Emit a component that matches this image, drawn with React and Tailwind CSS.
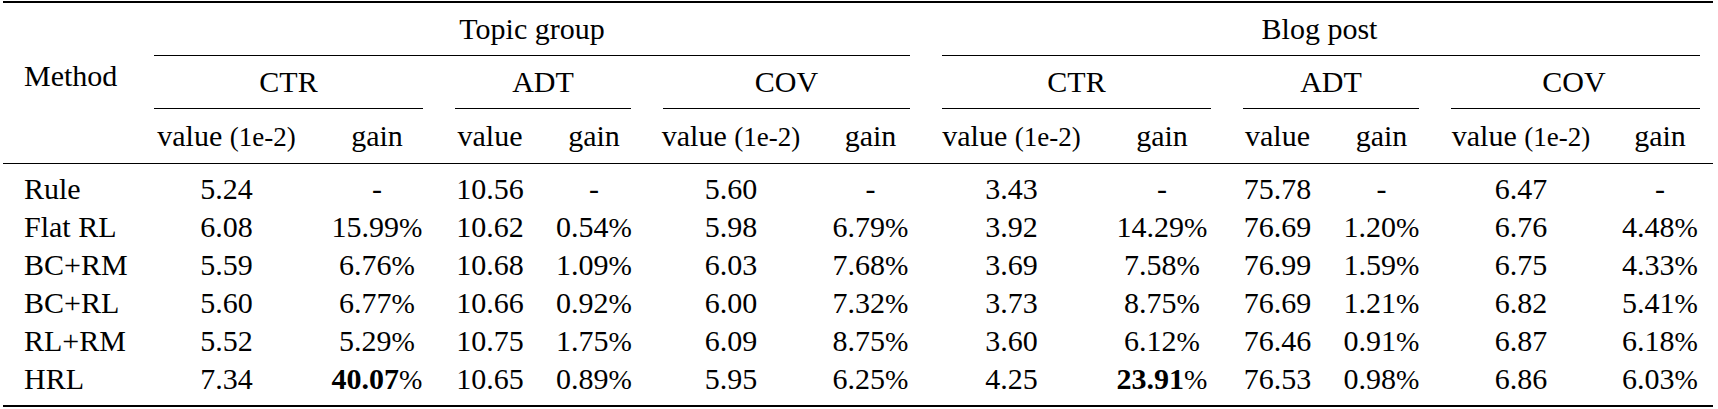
import React from "react";

const cols =
  "grid grid-cols-[135px_177px_124px_102px_106px_168px_111px_171px_130px_101px_107px_172px_106px]";

const rows = [
  ["Rule", "5.24", "-", "10.56", "-", "5.60", "-", "3.43", "-", "75.78", "-", "6.47", "-"],
  ["Flat RL", "6.08", "15.99%", "10.62", "0.54%", "5.98", "6.79%", "3.92", "14.29%", "76.69", "1.20%", "6.76", "4.48%"],
  ["BC+RM", "5.59", "6.76%", "10.68", "1.09%", "6.03", "7.68%", "3.69", "7.58%", "76.99", "1.59%", "6.75", "4.33%"],
  ["BC+RL", "5.60", "6.77%", "10.66", "0.92%", "6.00", "7.32%", "3.73", "8.75%", "76.69", "1.21%", "6.82", "5.41%"],
  ["RL+RM", "5.52", "5.29%", "10.75", "1.75%", "6.09", "8.75%", "3.60", "6.12%", "76.46", "0.91%", "6.87", "6.18%"],
  ["HRL", "7.34", "**40.07", "10.65", "0.89%", "5.95", "6.25%", "4.25", "**23.91", "76.53", "0.98%", "6.86", "6.03%"],
];

const metrics = ["CTR", "ADT", "COV", "CTR", "ADT", "COV"];
const sub = [true, false, true, true, false, true];

function Cell({ v }) {
  if (v.startsWith("**")) {
    return (
      <span>
        <b className="font-bold">{v.slice(2)}</b>
        <span className="text-[28px]">%</span>
      </span>
    );
  }
  if (v.endsWith("%")) {
    return (
      <span>
        {v.slice(0, -1)}
        <span className="text-[28px]">%</span>
      </span>
    );
  }
  return <span>{v}</span>;
}

export default function App() {
  return (
    <div className="bg-white text-black font-serif text-[30px] leading-none w-[1718px] h-[409px] pl-[3px] pt-[1px]">
      <div className="w-[1710px] [font-family:Liberation_Serif,serif]">
        <div className="h-[2px] bg-black" />

        <div className={`${cols} grid-rows-[52px_1px_52px_1px_54px]`}>
          <div className="row-start-1 row-span-5 col-start-1 flex items-center pl-[21px] pb-[14px]">
            Method
          </div>

          <div className="row-start-1 col-start-2 col-span-6 flex items-center justify-center">Topic group</div>
          <div className="row-start-1 col-start-8 col-span-6 flex items-center justify-center">Blog post</div>

          <div className="row-start-2 col-start-2 col-span-6 mx-[16px] bg-black" />
          <div className="row-start-2 col-start-8 col-span-6 ml-[16px] mr-[13px] bg-black" />

          {metrics.map((m, i) => (
            <div key={"m" + i} className="row-start-3 col-span-2 flex items-center justify-center">
              {m}
            </div>
          ))}

          {metrics.map((m, i) => (
            <div
              key={"r" + i}
              className={`row-start-4 col-span-2 bg-black ml-[16px] ${i === 5 ? "mr-[13px]" : "mr-[16px]"}`}
            />
          ))}

          <div className="row-start-5 col-start-1" />
          {sub.map((s, i) => (
            <React.Fragment key={"s" + i}>
              <div className="row-start-5 flex items-center justify-center">
                {s ? (
                  <span>
                    value <span className="text-[27px]">(1e-2)</span>
                  </span>
                ) : (
                  "value"
                )}
              </div>
              <div className="row-start-5 flex items-center justify-center">gain</div>
            </React.Fragment>
          ))}
        </div>

        <div className="h-px bg-black" />

        <div className="pt-[6px] pb-[7px]">
          {rows.map((r, ri) => (
            <div key={ri} className={`${cols} h-[38px] items-center`}>
              {r.map((v, ci) =>
                ci === 0 ? (
                  <div key={ci} className="pl-[21px]">
                    {v}
                  </div>
                ) : (
                  <div key={ci} className="text-center">
                    <Cell v={v} />
                  </div>
                )
              )}
            </div>
          ))}
        </div>

        <div className="h-[2px] bg-black" />
      </div>
    </div>
  );
}
